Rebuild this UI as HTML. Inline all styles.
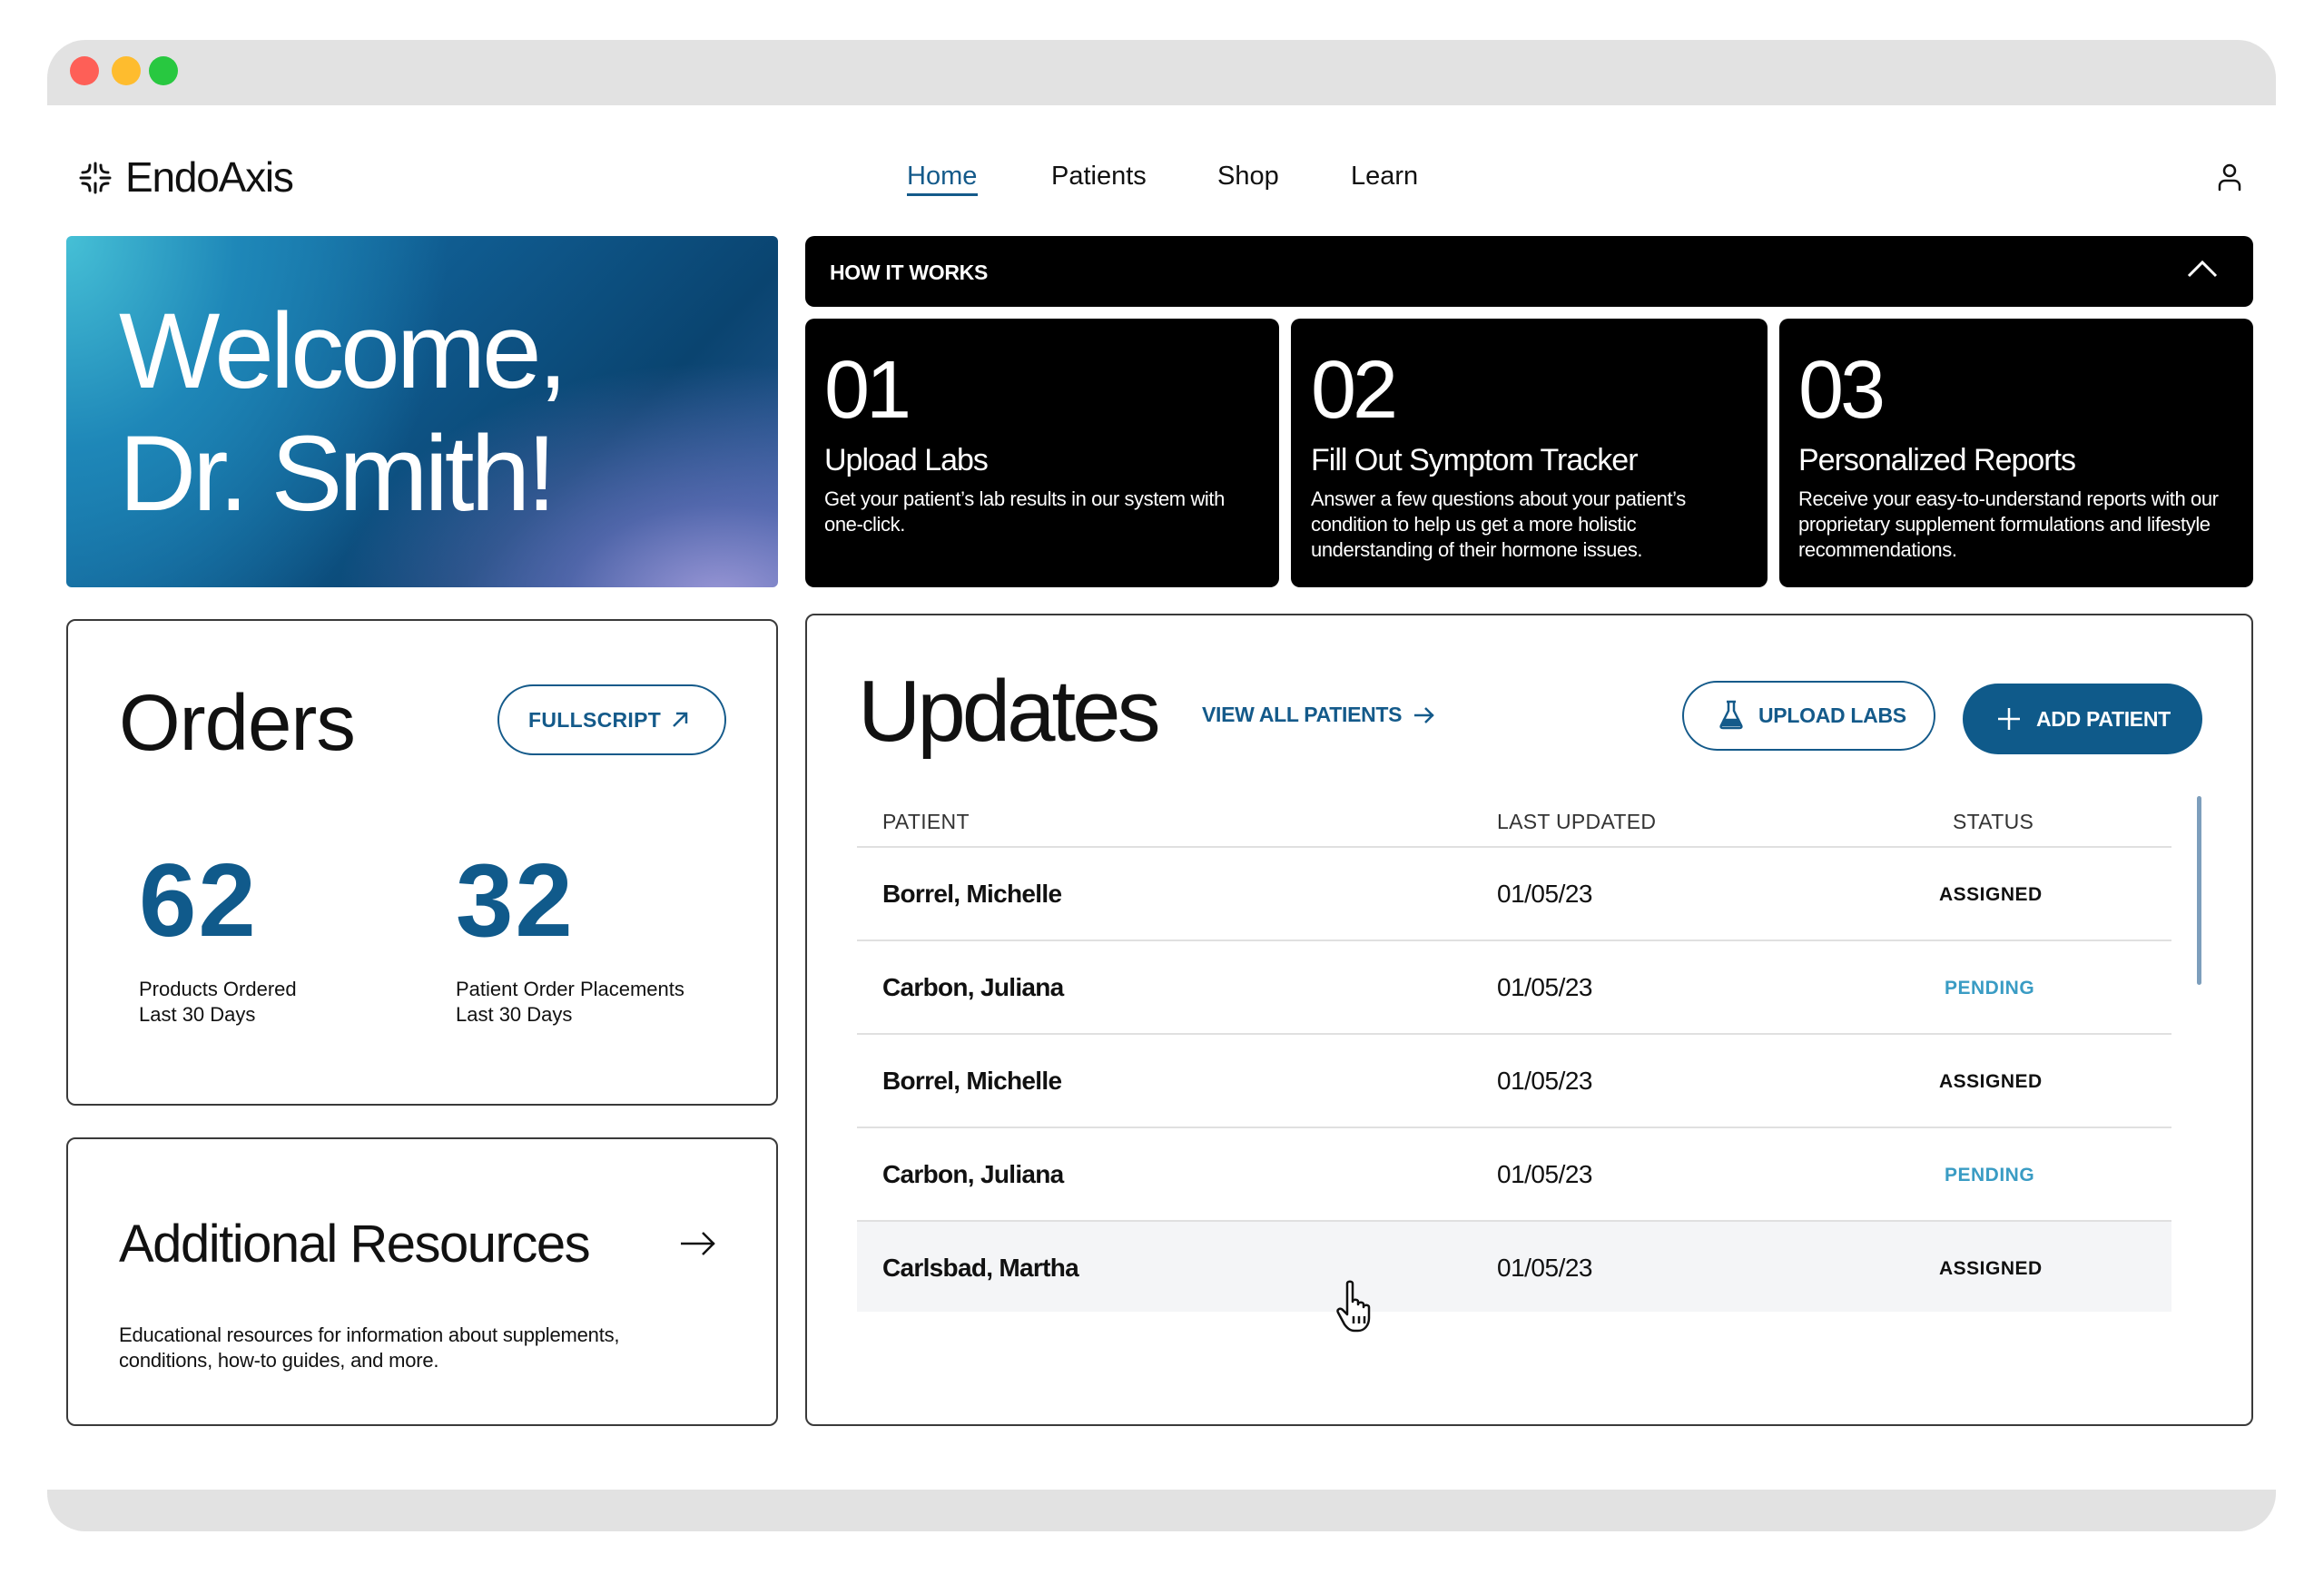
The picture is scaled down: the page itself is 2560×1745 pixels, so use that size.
<!DOCTYPE html>
<html><head><meta charset="utf-8">
<style>
*{margin:0;padding:0;box-sizing:border-box}
body{width:2560px;height:1745px;background:#fff;position:relative;overflow:hidden;font-family:"Liberation Sans",Arial,sans-serif;color:#111}
.a{position:absolute;white-space:nowrap;line-height:1}
.frame{position:absolute;left:52px;top:44px;width:2455px;height:1643px;border-radius:42px;background:#e2e2e2;overflow:hidden}
.page{position:absolute;left:52px;top:116px;width:2455px;height:1525px;background:#fff}
.dot{position:absolute;width:32px;height:32px;border-radius:50%;top:62px}
.card{position:absolute;border:2px solid #3a3a3a;border-radius:10px;background:#fff}
.blk{position:absolute;background:#000;border-radius:10px;color:#fff}
.hdr{font-size:23px;color:#333;letter-spacing:0.3px}
.row{position:absolute;left:944px;width:1448px;height:103px;border-top:2px solid #e0e0e0}
.nm{font-size:28px;font-weight:bold;letter-spacing:-0.7px;color:#111}
.dt{font-size:28px;color:#111;letter-spacing:-0.5px}
.st{font-size:21px;font-weight:bold;letter-spacing:0.5px}
</style></head><body>
<div class="frame"></div>
<div class="page"></div>
<div class="dot" style="left:77px;background:#fe5f57"></div>
<div class="dot" style="left:123px;background:#febc2e"></div>
<div class="dot" style="left:164px;background:#28c840"></div>

<svg class="a" style="left:86px;top:177px" width="38" height="38" viewBox="0 0 38 38" fill="none" stroke="#111" stroke-width="3" stroke-linecap="round">
<path d="M19 3v10M19 25v10M3 19h10M25 19h10"/>
<path d="M13 5c0 6-2 8-8 8M25 5c0 6 2 8 8 8M13 33c0-6-2-8-8-8M25 33c0-6 2-8 8-8"/>
</svg>
<div class="a" style="left:138px;top:172px;font-size:46px;letter-spacing:-1.2px">EndoAxis</div>

<div class="a" style="left:999px;top:180px;font-size:29px;color:#145a8a">Home</div>
<div class="a" style="left:999px;top:213px;width:78px;height:3px;background:#145a8a"></div>
<div class="a" style="left:1158px;top:180px;font-size:29px">Patients</div>
<div class="a" style="left:1341px;top:180px;font-size:29px">Shop</div>
<div class="a" style="left:1488px;top:180px;font-size:29px">Learn</div>
<svg class="a" style="left:2440px;top:178px" width="32" height="34" viewBox="0 0 32 34" fill="none" stroke="#111" stroke-width="2.5" stroke-linecap="round"><circle cx="16" cy="10" r="6"/><path d="M5 31v-4c0-4 3-6 6-6h10c3 0 6 2 6 6v4"/></svg>

<div class="a" style="left:73px;top:260px;width:784px;height:387px;border-radius:6px;overflow:hidden;background:
radial-gradient(ellipse 420px 260px at 720px 400px,#9a97d6 0%,rgba(120,120,200,.6) 40%,rgba(20,70,130,0) 100%),
radial-gradient(ellipse 420px 520px at 0px 0px,#46c0d6 0%,#1e87b8 45%,rgba(20,90,150,0) 100%),
linear-gradient(135deg,#1878ae 0%,#0f5a8e 40%,#0a4470 70%,#2a5a96 100%)"></div>
<div class="a" style="left:131px;top:320px;font-size:118px;line-height:135px;color:#fff;letter-spacing:-4px;white-space:normal;width:700px">Welcome,<br>Dr. Smith!</div>

<div class="blk" style="left:887px;top:260px;width:1595px;height:78px"></div>
<div class="a" style="left:914px;top:289px;font-size:23px;color:#fff;font-weight:bold;letter-spacing:-0.3px">HOW IT WORKS</div>
<svg class="a" style="left:2408px;top:285px" width="36" height="22" viewBox="0 0 36 22" fill="none" stroke="#fff" stroke-width="3"><path d="M3 19L18 4l15 15"/></svg>

<div class="blk" style="left:887px;top:351px;width:522px;height:296px"></div>
<div class="blk" style="left:1422px;top:351px;width:525px;height:296px"></div>
<div class="blk" style="left:1960px;top:351px;width:522px;height:296px"></div>

<div class="a" style="left:908px;top:385px;font-size:90px;color:#fff;letter-spacing:-4px">01</div>
<div class="a" style="left:908px;top:490px;font-size:34px;color:#fff;letter-spacing:-1px">Upload Labs</div>
<div class="a" style="left:908px;top:536px;font-size:22px;line-height:28px;color:#fff;white-space:normal;width:470px;letter-spacing:-0.4px">Get your patient’s lab results in our system with one-click.</div>

<div class="a" style="left:1444px;top:385px;font-size:90px;color:#fff;letter-spacing:-4px">02</div>
<div class="a" style="left:1444px;top:490px;font-size:34px;color:#fff;letter-spacing:-1px">Fill Out Symptom Tracker</div>
<div class="a" style="left:1444px;top:536px;font-size:22px;line-height:28px;color:#fff;white-space:normal;width:470px;letter-spacing:-0.4px">Answer a few questions about your patient’s condition to help us get a more holistic understanding of their hormone issues.</div>

<div class="a" style="left:1981px;top:385px;font-size:90px;color:#fff;letter-spacing:-4px">03</div>
<div class="a" style="left:1981px;top:490px;font-size:34px;color:#fff;letter-spacing:-1px">Personalized Reports</div>
<div class="a" style="left:1981px;top:536px;font-size:22px;line-height:28px;color:#fff;white-space:normal;width:465px;letter-spacing:-0.4px">Receive your easy-to-understand reports with our proprietary supplement formulations and lifestyle recommendations.</div>

<div class="card" style="left:73px;top:682px;width:784px;height:536px"></div>
<div class="a" style="left:131px;top:753px;font-size:87px;letter-spacing:-1px">Orders</div>
<div class="a" style="left:548px;top:754px;width:252px;height:78px;border:2px solid #145a8a;border-radius:40px"></div>
<div class="a" style="left:582px;top:782px;font-size:23px;font-weight:bold;color:#145a8a;letter-spacing:0.3px">FULLSCRIPT</div>
<svg class="a" style="left:738px;top:782px" width="22" height="22" viewBox="0 0 22 22" fill="none" stroke="#145a8a" stroke-width="2.5"><path d="M4 18L18 4M7 4h11v11"/></svg>
<div class="a" style="left:153px;top:936px;font-size:114px;font-weight:bold;color:#105a8b;letter-spacing:2px">62</div>
<div class="a" style="left:153px;top:1076px;font-size:22px;line-height:28px;white-space:normal;width:300px;letter-spacing:0px">Products Ordered<br>Last 30 Days</div>
<div class="a" style="left:502px;top:936px;font-size:114px;font-weight:bold;color:#105a8b;letter-spacing:2px">32</div>
<div class="a" style="left:502px;top:1076px;font-size:22px;line-height:28px;white-space:normal;width:320px;letter-spacing:0px">Patient Order Placements<br>Last 30 Days</div>

<div class="card" style="left:73px;top:1253px;width:784px;height:318px"></div>
<div class="a" style="left:131px;top:1342px;font-size:58px;letter-spacing:-1.5px">Additional Resources</div>
<svg class="a" style="left:748px;top:1355px" width="42" height="30" viewBox="0 0 42 30" fill="none" stroke="#111" stroke-width="2.5"><path d="M2 15h37M26 3l12 12-12 12"/></svg>
<div class="a" style="left:131px;top:1457px;font-size:22px;line-height:28px;white-space:normal;width:640px;letter-spacing:-0.2px">Educational resources for information about supplements, conditions, how-to guides, and more.</div>

<div class="card" style="left:887px;top:676px;width:1595px;height:895px"></div>
<div class="a" style="left:945px;top:736px;font-size:96px;letter-spacing:-4px">Updates</div>
<div class="a" style="left:1324px;top:776px;font-size:23px;font-weight:bold;color:#145a8a;letter-spacing:-0.3px">VIEW ALL PATIENTS</div>
<svg class="a" style="left:1556px;top:777px" width="26" height="22" viewBox="0 0 26 22" fill="none" stroke="#145a8a" stroke-width="2.5"><path d="M2 11h21M14 3l8 8-8 8"/></svg>
<div class="a" style="left:1853px;top:750px;width:279px;height:77px;border:2px solid #145a8a;border-radius:40px"></div>
<svg class="a" style="left:1893px;top:770px" width="28" height="34" viewBox="0 0 28 34" fill="none" stroke="#145a8a" stroke-width="2.5"><path d="M9 3h10M11 3v10L3 29c-1 2 0 3 2 3h18c2 0 3-1 2-3L17 13V3"/><path d="M6 23h16l2 6H4z" fill="#145a8a"/></svg>
<div class="a" style="left:1937px;top:777px;font-size:23px;font-weight:bold;color:#145a8a;letter-spacing:-0.3px">UPLOAD LABS</div>
<div class="a" style="left:2162px;top:753px;width:264px;height:78px;background:#0f5a8a;border-radius:40px"></div>
<svg class="a" style="left:2200px;top:779px" width="26" height="26" viewBox="0 0 26 26" stroke="#fff" stroke-width="2.5"><path d="M13 1v24M1 13h24"/></svg>
<div class="a" style="left:2243px;top:781px;font-size:23px;font-weight:bold;color:#fff;letter-spacing:-0.3px">ADD PATIENT</div>

<div class="a hdr" style="left:972px;top:894px">PATIENT</div>
<div class="a hdr" style="left:1649px;top:894px">LAST UPDATED</div>
<div class="a hdr" style="left:2151px;top:894px">STATUS</div>
<div class="a" style="left:2420px;top:877px;width:5px;height:208px;background:#7d9ebc;border-radius:3px"></div>

<div class="row" style="top:932px"></div>
<div class="row" style="top:1035px"></div>
<div class="row" style="top:1138px"></div>
<div class="row" style="top:1241px"></div>
<div class="row" style="top:1344px;height:101px;background:#f4f5f7"></div>

<div class="a nm" style="left:972px;top:971px">Borrel, Michelle</div>
<div class="a dt" style="left:1649px;top:971px">01/05/23</div>
<div class="a st" style="left:2136px;top:975px">ASSIGNED</div>

<div class="a nm" style="left:972px;top:1074px">Carbon, Juliana</div>
<div class="a dt" style="left:1649px;top:1074px">01/05/23</div>
<div class="a st" style="left:2142px;top:1078px;color:#3a9cc4">PENDING</div>

<div class="a nm" style="left:972px;top:1177px">Borrel, Michelle</div>
<div class="a dt" style="left:1649px;top:1177px">01/05/23</div>
<div class="a st" style="left:2136px;top:1181px">ASSIGNED</div>

<div class="a nm" style="left:972px;top:1280px">Carbon, Juliana</div>
<div class="a dt" style="left:1649px;top:1280px">01/05/23</div>
<div class="a st" style="left:2142px;top:1284px;color:#3a9cc4">PENDING</div>

<div class="a nm" style="left:972px;top:1383px">Carlsbad, Martha</div>
<div class="a dt" style="left:1649px;top:1383px">01/05/23</div>
<div class="a st" style="left:2136px;top:1387px">ASSIGNED</div>

<svg class="a" style="left:1470px;top:1410px" width="52" height="60" viewBox="0 0 52 60" fill="#fff" stroke="#111" stroke-width="2.5" stroke-linejoin="round"><path d="M14 4c0-3 6-3 6 0v20c0-3 6-3 6 0v3c0-3 6-3 6 0v3c0-3 6-3 6 0v12c0 8-5 14-12 14h-4c-5 0-8-3-11-7L4 36c-2-3 2-6 5-3l5 5z"/><path d="M21 40v8M27 40v8M33 40v8" fill="none"/></svg>
</body></html>
